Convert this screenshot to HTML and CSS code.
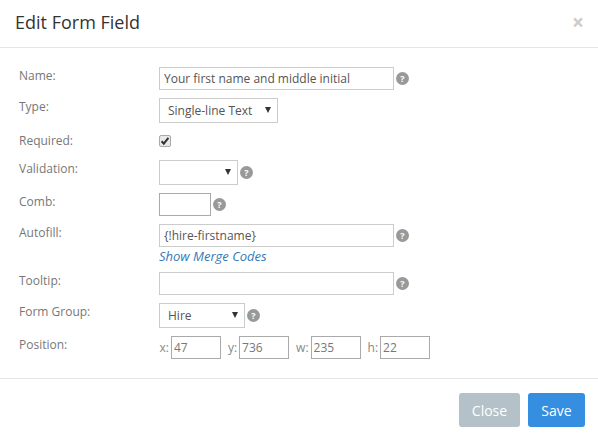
FILE: index.html
```html
<!DOCTYPE html>
<html>
<head>
  <title>Edit Form Field</title>
  <link rel="stylesheet" href="styles.css">
</head>
<body>
  <div class="modal">
    <div class="modal-header">
      <h1>Edit Form Field</h1>
      <a href="#" class="modal-close">&times;</a>
    </div>
    <div class="modal-body">
      <div class="form-row row-name">
        <label>Name:</label>
        <div class="field">
          <input type="text" class="input-wide" value="Your first name and middle initial">
          <span class="help">?</span>
        </div>
      </div>
      <div class="form-row row-type">
        <label>Type:</label>
        <div class="field">
          <div class="select-wrap select-type">
            <select><option>Single-line Text</option></select>
          </div>
        </div>
      </div>
      <div class="form-row row-required">
        <label>Required:</label>
        <div class="field">
          <span class="check">
            <svg width="12" height="12" viewBox="0 0 12 12"><path d="M2.6 6.2 L4.8 8.6 L9.4 2.8" fill="none" stroke="#333" stroke-width="2"/></svg>
          </span>
        </div>
      </div>
      <div class="form-row row-validation">
        <label>Validation:</label>
        <div class="field">
          <div class="select-wrap select-validation">
            <select><option></option></select>
          </div>
          <span class="help">?</span>
        </div>
      </div>
      <div class="form-row row-comb">
        <label>Comb:</label>
        <div class="field">
          <input type="text" class="input-comb">
          <span class="help">?</span>
        </div>
      </div>
      <div class="form-row row-autofill">
        <label>Autofill:</label>
        <div class="field-stack">
          <div class="field">
            <input type="text" class="input-wide" value="{!hire-firstname}">
            <span class="help">?</span>
          </div>
          <a href="#" class="merge-link">Show Merge Codes</a>
        </div>
      </div>
      <div class="form-row row-tooltip">
        <label>Tooltip:</label>
        <div class="field">
          <input type="text" class="input-wide">
          <span class="help">?</span>
        </div>
      </div>
      <div class="form-row row-group">
        <label>Form Group:</label>
        <div class="field">
          <div class="select-wrap select-group">
            <select><option>Hire</option></select>
          </div>
          <span class="help">?</span>
        </div>
      </div>
      <div class="form-row row-position">
        <label>Position:</label>
        <div class="position">
          <span>x:</span><input type="text" class="input-pos" value="47">
          <span>y:</span><input type="text" class="input-pos" value="736">
          <span>w:</span><input type="text" class="input-pos" value="235">
          <span>h:</span><input type="text" class="input-pos" value="22">
        </div>
      </div>
    </div>
    <div class="modal-footer">
      <button class="btn btn-close">Close</button>
      <button class="btn btn-save">Save</button>
    </div>
  </div>
</body>
</html>
```

FILE: styles.css
```css
body {
  font-family: "Open Sans", Arial, sans-serif;
  font-size: 12px;
  color: #555;
  background-color: #fff;
  margin: 0;
  padding: 0;
}

.modal {
  width: 598px;
  height: 440px;
  overflow: hidden;
}

.modal-header {
  height: 47px;
  box-sizing: content-box;
  border-bottom: 1px solid #e5e5e5;
  padding: 0 15px;
  display: flex;
  justify-content: space-between;
  align-items: center;
}

.modal-header h1 {
  margin: 0 0 3px;
  font-size: 18px;
  font-weight: 400;
  color: #333;
}

.modal-close {
  color: #ccc;
  font-size: 21px;
  font-weight: 700;
  line-height: 1;
  margin: 0 -1px 3px 0;
  text-decoration: none;
}

.modal-body {
  height: 311px;
  padding: 19px 0 0 19px;
}

.form-row {
  display: flex;
  align-items: flex-start;
}

.form-row label {
  width: 140px;
  flex: none;
  color: #777;
  line-height: 17px;
}

.field {
  display: flex;
  align-items: center;
}

.field-stack {
  display: flex;
  flex-direction: column;
}

.row-name { margin-bottom: 8px; }
.row-type { margin-bottom: 12px; }
.row-required { margin-bottom: 13px; height: 12px; }
.row-required label { margin-top: -3px; }
.row-validation { margin-bottom: 8px; }
.row-comb { margin-bottom: 8px; }
.row-autofill { margin-bottom: 7px; }
.row-tooltip { margin-bottom: 8px; }
.row-group { margin-bottom: 8px; }

input[type="text"] {
  height: 23px;
  box-sizing: border-box;
  border: 1px solid #ccc;
  padding: 0 4px;
  font-family: inherit;
  font-size: 12px;
  color: #555;
  background: #fff;
  outline: none;
}

.input-wide { width: 235px; }

.input-comb {
  width: 52px;
  border-color: #aaa !important;
}

.input-pos {
  width: 50px;
  border-color: #aaa !important;
  padding: 0 2px !important;
  color: #777 !important;
}

.select-wrap {
  position: relative;
  height: 25px;
}

.select-wrap::after {
  content: "";
  position: absolute;
  top: 9px;
  right: 7px;
  border-left: 3.5px solid transparent;
  border-right: 3.5px solid transparent;
  border-top: 6px solid #333;
}

.select-wrap select {
  appearance: none;
  width: 100%;
  height: 25px;
  box-sizing: border-box;
  border: 1px solid #ccc;
  border-radius: 0;
  padding: 0 8px;
  font-family: inherit;
  font-size: 12px;
  color: #555;
  background: #fff;
  outline: none;
}

.select-type { width: 119px; }
.select-validation { width: 79px; }
.select-group { width: 86px; }

.check {
  display: block;
  width: 12px;
  height: 12px;
  box-sizing: border-box;
  border: 1px solid #aaa;
  border-radius: 2px;
  background: #e8e8e8;
  overflow: hidden;
}

.check svg {
  display: block;
  margin: -1px;
}

.help {
  width: 13px;
  height: 13px;
  margin-left: 2px;
  border-radius: 50%;
  background: #999;
  color: #fff;
  font-size: 9px;
  font-weight: 700;
  line-height: 13px;
  text-align: center;
  flex: none;
}

.merge-link {
  margin-top: 1px;
  color: #337ab7;
  font-size: 13px;
  font-style: italic;
  text-decoration: none;
  line-height: 17px;
}

.position {
  display: flex;
  align-items: center;
  color: #888;
  padding-left: 0.5px;
}

.position span {
  margin: 0 2px 0 7px;
}

.position span:first-child {
  margin-left: 0;
}

.modal-footer {
  border-top: 1px solid #e5e5e5;
  padding: 14px 13px 0 0;
  display: flex;
  justify-content: flex-end;
  gap: 8px;
}

.btn {
  height: 34px;
  border: none;
  border-radius: 3px;
  color: #fff;
  font-family: inherit;
  font-size: 14px;
  cursor: pointer;
}

.btn-close {
  width: 61px;
  background-color: #b4c1c8;
}

.btn-save {
  width: 57px;
  background-color: #368ee0;
}
```
